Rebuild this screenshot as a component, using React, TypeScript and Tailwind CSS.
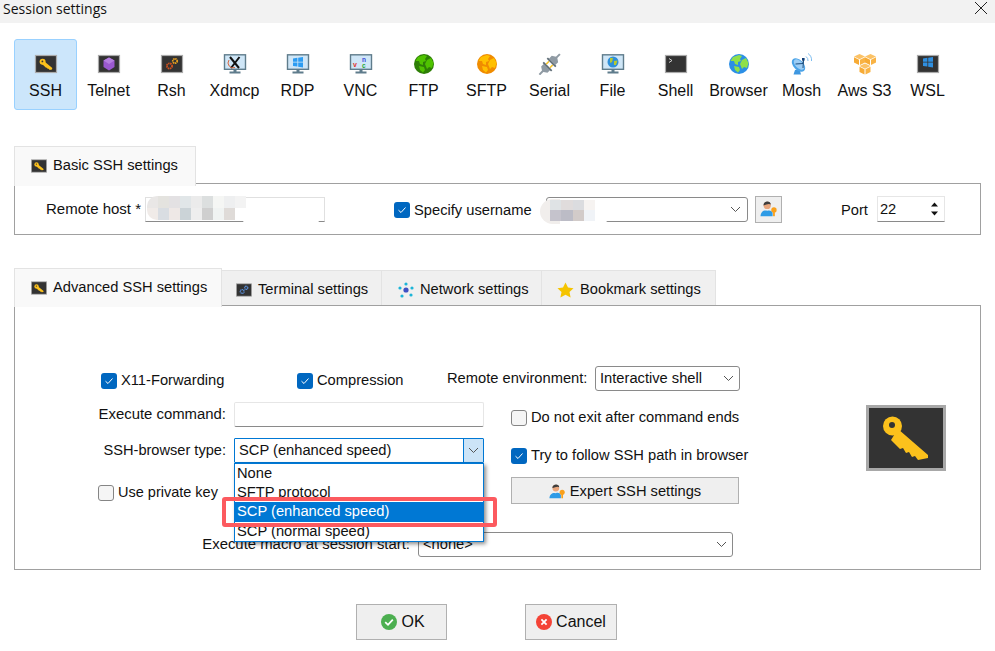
import type { ReactNode } from "react";

// Small drawings used by the toolbar and the tabs
function Key() {
    return (
        <g fill="#fcc11c">
            <circle cx="8.6" cy="7.8" r="3" />
            <polygon points="9.5,6.8 18.3,14 18,15.6 15.6,16 14.8,14.8 13.8,15 13,13.7 12,13.8 8,10" />
            <circle cx="8.4" cy="7.4" r="0.9" fill="#333" />
        </g>
    );
}

function DarkBox({ children }: { children?: ReactNode }) {
    return (
        <svg width="24" height="20" viewBox="0 0 24 20">
            <rect x="1.5" y="1.5" width="21" height="17" fill="#333" stroke="#aaa" strokeWidth="1.2" />
            {children}
        </svg>
    );
}

function TabBox({ children }: { children?: ReactNode }) {
    return (
        <svg width="16" height="14" viewBox="1 1 22 18" className="shrink-0">
            <rect x="1.5" y="1.5" width="21" height="17" fill="#333" stroke="#aaa" />
            {children}
        </svg>
    );
}

function Gears({ a, b }: { a: string; b: string }) {
    return (
        <g fill="none" strokeWidth="1.8">
            <circle cx="9.5" cy="12" r="2.6" stroke={a} strokeDasharray="1.5 .6" />
            <circle cx="15" cy="7" r="2.2" stroke={b} strokeDasharray="1.4 .5" />
        </g>
    );
}

function Globe({ sea, land }: { sea: string; land: string }) {
    return (
        <svg width="20" height="20" viewBox="0 0 20 20">
            <circle cx="10" cy="10" r="10" fill={sea} />
            <path d="M4 3 L10 1 L13 2 L11 5 L12 7 L9 8 L9 11 L6 10 L5 7 L1.5 7 Z" fill={land} />
            <path d="M13 6 L17 4 L19.5 9 L18 14 L15 13 L13 15 L11 10 Z" fill={land} />
            <path d="M5 12 L10 13 L11 16 L9 18.5 L6 16 Z" fill={land} />
        </svg>
    );
}

function Monitor({ children }: { children?: ReactNode }) {
    return (
        <svg width="24" height="20" viewBox="0 0 24 20">
            <rect x="1.5" y="0.8" width="21" height="14.5" fill="#cfe6f7" stroke="#5f7c8c" strokeWidth="1.4" />
            <rect x="10.5" y="15" width="3" height="3" fill="#5f7c8c" />
            <rect x="6.5" y="17.5" width="11" height="2" fill="#5f7c8c" />
            {children}
        </svg>
    );
}

function Windows({ fill }: { fill: string }) {
    return (
        <g fill={fill}>
            <polygon points="7,4.5 11.4,3.8 11.4,7.8 7,7.8" />
            <polygon points="12.2,3.7 17,3 17,7.8 12.2,7.8" />
            <polygon points="7,8.6 11.4,8.6 11.4,12.6 7,12" />
            <polygon points="12.2,8.6 17,8.6 17,13.4 12.2,12.7" />
        </g>
    );
}

function Cube({ x, y }: { x: number; y: number }) {
    return (
        <g transform={`translate(${x} ${y})`}>
            <polygon points="5.5,0 11,2.6 5.5,5.2 0,2.6" fill="#fbc266" />
            <polygon points="0,3.3 5,5.8 5,11 0,8.5" fill="#f7ab35" />
            <polygon points="11,3.3 6,5.8 6,11 11,8.5" fill="#f9b344" />
        </g>
    );
}

function UserKey({ size = 20 }: { size?: number }) {
    return (
        <svg width={size} height={size} viewBox="0 0 20 20">
            <circle cx="8" cy="6" r="4" fill="#e8a57c" />
            <path d="M4 6 C3.5 1 12 0 12 5 C10 3.5 7 5 4 6 Z" fill="#3d3d3d" />
            <path d="M0.5 18 C1 12 5 11 8 12 C11 11 13 12 14 14 L14 18 Z" fill="#2e9be6" />
            <circle cx="15.5" cy="11" r="3" fill="#f9a01b" />
            <rect x="14.5" y="12" width="2" height="6" fill="#f9a01b" />
        </svg>
    );
}

function Chevron() {
    return (
        <svg width="11" height="7" viewBox="0 0 11 7" className="shrink-0">
            <polyline points="1,1 5.5,5.5 10,1" fill="none" stroke="#555" strokeWidth="1" />
        </svg>
    );
}

function Check({ on, className = "" }: { on: boolean; className?: string }) {
    if (!on) {
        return <span className={`block w-4 h-4 shrink-0 rounded-[3px] border border-[#858585] bg-[#f5f5f5] ${className}`} />;
    }
    return (
        <span className={`flex items-center justify-center w-4 h-4 shrink-0 rounded-[3px] bg-[#0067c0] ${className}`}>
            <svg width="10" height="8" viewBox="0 0 10 8">
                <polyline points="1.5,4.2 4,6.5 8.5,1.5" fill="none" stroke="#fff" strokeWidth="1" />
            </svg>
        </span>
    );
}

const SESSION_TYPES: { label: string; icon: ReactNode }[] = [
    { label: "SSH", icon: <DarkBox><Key /></DarkBox> },
    {
        label: "Telnet",
        icon: (
            <DarkBox>
                <polygon points="12,3.5 17.5,6.5 17.5,13 12,16.5 6.5,13 6.5,6.5" fill="#9b59d0" />
                <polygon points="12,3.5 17.5,6.5 12,10 6.5,6.5" fill="#b57ee0" />
            </DarkBox>
        ),
    },
    { label: "Rsh", icon: <DarkBox><Gears a="#d2521e" b="#e8a01e" /></DarkBox> },
    {
        label: "Xdmcp",
        icon: (
            <Monitor>
                <path d="M7 3 L16 14 M16.5 3 L8 14" stroke="#111" strokeWidth="2" />
                <path d="M6 6 A5 5 0 0 0 12 13.5" stroke="#d9653b" strokeWidth="1" fill="none" />
            </Monitor>
        ),
    },
    { label: "RDP", icon: <Monitor><Windows fill="#2c9cf2" /></Monitor> },
    {
        label: "VNC",
        icon: (
            <Monitor>
                <text x="4" y="12.5" fontSize="7" fontWeight="700" fill="#e0332e" fontFamily="Liberation Sans">v</text>
                <text x="13" y="7.5" fontSize="6.5" fontWeight="700" fill="#3848d8" fontFamily="Liberation Sans">n</text>
                <text x="13" y="13.5" fontSize="6.5" fontWeight="700" fill="#28a838" fontFamily="Liberation Sans">c</text>
            </Monitor>
        ),
    },
    { label: "FTP", icon: <Globe sea="#2e7f06" land="#4fc300" /> },
    { label: "SFTP", icon: <Globe sea="#f08c00" land="#ffc000" /> },
    {
        label: "Serial",
        icon: (
            <svg width="24" height="22" viewBox="0 0 24 22">
                <g transform="rotate(-45 12 11)">
                    <rect x="-3" y="10" width="5" height="2" fill="#8f9aa3" />
                    <path d="M1 11 L4 6.5 L7.5 6.5 L7.5 15.5 L4 15.5 Z" fill="#8f9aa3" />
                    <rect x="7.5" y="5" width="1.8" height="12" fill="#5d6b75" />
                    <rect x="9.3" y="7.6" width="4" height="1.6" fill="#f4c430" />
                    <rect x="9.3" y="12.8" width="4" height="1.6" fill="#f4c430" />
                    <rect x="13.3" y="5" width="1.8" height="12" fill="#5d6b75" />
                    <path d="M15 6.5 L19 6.5 L22 11 L19 15.5 L15 15.5 Z" fill="#8f9aa3" />
                    <rect x="21" y="10" width="5" height="2" fill="#8f9aa3" />
                </g>
            </svg>
        ),
    },
    {
        label: "File",
        icon: (
            <Monitor>
                <circle cx="12" cy="8" r="5.5" fill="#2e8fd8" />
                <path d="M9 4 L12 4 L11 8 L9 9 Z M13 7 L16.5 6.5 L15 11 L13 11 Z" fill="#b6c92f" />
            </Monitor>
        ),
    },
    {
        label: "Shell",
        icon: (
            <DarkBox>
                <polyline points="5,4.5 8,6.5 5,8.5" fill="none" stroke="#ddd" strokeWidth="0.9" />
            </DarkBox>
        ),
    },
    { label: "Browser", icon: <Globe sea="#2b8fe6" land="#8fe04a" /> },
    {
        label: "Mosh",
        icon: (
            <svg width="24" height="22" viewBox="0 0 24 22">
                <path d="M5 17 L3.5 21.5 L11 21.5 L9.5 16 Z" fill="#3f97e0" />
                <ellipse cx="8.5" cy="12" rx="8" ry="5" transform="rotate(45 8.5 12)" fill="#4aa3e8" />
                <ellipse cx="9" cy="11.5" rx="6.5" ry="3.6" transform="rotate(45 9 11.5)" fill="#9ccdf5" />
                <path d="M5.5 11 L13 10.5 L13.5 6.5 L13 15" stroke="#1c4f80" strokeWidth="1" fill="none" />
                <rect x="12" y="5" width="2.6" height="2.6" fill="#123f78" />
                <path d="M16 3.5 A5 5 0 0 1 18 8 M18 0.5 A8 8 0 0 1 21.5 8" stroke="#7dbdf0" strokeWidth="1" fill="none" />
            </svg>
        ),
    },
    {
        label: "Aws S3",
        icon: (
            <svg width="24" height="21" viewBox="0 0 24 21">
                <Cube x={1} y={0} />
                <Cube x={12} y={0} />
                <Cube x={6.5} y={9.5} />
            </svg>
        ),
    },
    { label: "WSL", icon: <DarkBox><Windows fill="#2f8fe0" /></DarkBox> },
];

const HOST_BLUR = [
    "bg-[#e9e7e6]", "bg-[#e4e3df]", "bg-[#e3e1e3]", "bg-[#e1e6e8]", "bg-[#ebebeb]", "bg-[#dcdfdf]", "bg-[#f5f6f4]", "bg-[#eeeff0]", "bg-[#f3f3f3]",
    "bg-[#f0ebe8]", "bg-[#d9dde2]", "bg-[#eee8e6]", "bg-[#cbd3d7]", "bg-[#eeeeee]", "bg-[#cfcfcf]", "bg-[#f0f3f2]", "bg-[#dfdbd8]", "bg-white",
];

const USER_BLUR = [
    "bg-[#dfe3e5]", "bg-[#e0dcdc]", "bg-[#dbdcdf]", "bg-[#f6f3f1]",
    "bg-[#c5c3cc]", "bg-[#bcbcc6]", "bg-[#d2cbc9]", "bg-[#f0f3f7]",
];

export default function App() {
    return (
        <div className="relative w-[995px] h-[651px] overflow-hidden bg-white text-[14.7px] text-[#111] font-['Liberation_Sans',sans-serif]">
            {/* Title bar */}
            <div className="flex items-start justify-between h-[23px] pt-[1px] bg-[#f2f2f2]">
                <span className="pl-[3px] text-[14px] leading-[15px] font-['Open_Sans',sans-serif]">Session settings</span>
                <svg width="14" height="14" viewBox="0 0 14 14" className="mr-[7px]">
                    <path d="M1 1 L13 13 M13 1 L1 13" stroke="#222" strokeWidth="1" />
                </svg>
            </div>

            {/* Session types */}
            <div className="flex mt-[16px] ml-[14px]">
                {SESSION_TYPES.map((s) => (
                    <button
                        key={s.label}
                        className={`flex flex-col items-center w-[63px] h-[71px] rounded-[3px] border ${s.label === "SSH" ? "bg-[#cce6fb] border-[#99d1ff]" : "border-transparent"}`}
                    >
                        <span className="flex items-center justify-center h-[22px] mt-[13px]">{s.icon}</span>
                        <span className="mt-[6px] text-[16px] leading-5 whitespace-nowrap">{s.label}</span>
                    </button>
                ))}
            </div>

            {/* Basic settings */}
            <div className="flex items-center gap-[6px] relative z-10 mt-[36px] ml-[14px] pl-[16px] w-[182px] h-[40px] pb-[2px] bg-[#f9f9f9] border border-b-0 border-[#e3e3e3]">
                <TabBox><Key /></TabBox>
                <span>Basic SSH settings</span>
            </div>
            <div className="flex items-center mt-[-3px] mx-[14px] h-[52px] border border-[#a0a0a0]">
                <span className="ml-[31px] w-[99px] text-[15px] mt-[1px]">Remote host *</span>
                <div className="relative w-[180px] h-[25px] bg-white border border-[#e0e0e0] border-b-[#8a8a8a]">
                    <div className="absolute left-[95px] top-[8px] w-[80px] h-[19px] rounded-full bg-white" />
                    <div className="absolute left-[1px] top-[-2px] grid grid-cols-9 grid-rows-2 w-[99px] h-[24px] rounded-l-[10px] overflow-hidden">
                        {HOST_BLUR.map((c, i) => (
                            <span key={i} className={c} />
                        ))}
                    </div>
                </div>
                <Check on className="ml-[69px] mt-[2px]" />
                <span className="ml-[4px] w-[132px] mt-[2px]">Specify username</span>
                <div className="relative flex items-center justify-end pr-[6px] w-[202px] h-[25px] rounded-[3px] border border-[#8a8a8a]">
                    <div className="absolute left-[-7px] top-[1px] w-[20px] h-[25px] rounded-l-full bg-[#f1eeec]" />
                    <div className="absolute left-[13px] top-[1px] w-[52px] h-[25px] rounded-r-full bg-white" />
                    <div className="absolute left-[3px] top-[2px] grid grid-cols-4 w-[45px] h-[21px]">
                        {USER_BLUR.map((c, i) => (
                            <span key={i} className={c} />
                        ))}
                    </div>
                    <Chevron />
                </div>
                <button className="flex items-center justify-center ml-[7px] w-[27px] h-[27px] bg-[#efefef] border border-[#b0b0b0]">
                    <UserKey size={18} />
                </button>
                <span className="ml-[59px] mt-[2px]">Port</span>
                <div className="flex items-center justify-between ml-[9px] pl-[2px] pr-[5px] w-[68px] h-[26px] bg-white border border-[#e6e6e6] border-b-[#8a8a8a]">
                    <span>22</span>
                    <svg width="9" height="16" viewBox="0 0 9 16">
                        <path d="M4.5 1.5 L8 5.5 L1 5.5 Z M1 10.5 L8 10.5 L4.5 14.5 Z" fill="#111" />
                    </svg>
                </div>
            </div>

            {/* Advanced settings tabs */}
            <div className="relative z-10 flex items-start mt-[33px] ml-[14px]">
                <div className="flex items-center gap-[6px] pl-[16px] pb-[1px] w-[208px] h-[39px] bg-[#f9f9f9] border border-b-0 border-[#e3e3e3]">
                    <TabBox><Key /></TabBox>
                    <span>Advanced SSH settings</span>
                </div>
                <div className="flex items-center gap-[6px] mt-[2px] pl-[14px] pt-[3px] w-[160px] h-[35px] bg-[#f0f0f0] border-t border-r border-[#e3e3e3]">
                    <TabBox><Gears a="#5b8fd8" b="#5b8fd8" /></TabBox>
                    <span>Terminal settings</span>
                </div>
                <div className="flex items-center gap-[6px] mt-[2px] pl-[16px] pt-[3px] w-[160px] h-[35px] bg-[#f0f0f0] border-t border-r border-[#e3e3e3]">
                    <svg width="16" height="16" viewBox="0 0 16 16">
                        <g fill="#1cb5d8">
                            <circle cx="2" cy="6" r="1.6" />
                            <circle cx="8" cy="2" r="1.6" />
                            <circle cx="14" cy="6" r="1.6" />
                            <circle cx="4" cy="14" r="1.6" />
                            <circle cx="13" cy="13" r="1.6" />
                        </g>
                        <circle cx="8" cy="8" r="2.6" fill="#3f51c4" />
                    </svg>
                    <span>Network settings</span>
                </div>
                <div className="flex items-center gap-[6px] mt-[2px] pl-[15px] pt-[3px] w-[174px] h-[35px] bg-[#f0f0f0] border-t border-r border-[#e3e3e3]">
                    <svg width="17" height="16" viewBox="0 0 17 16">
                        <polygon points="8.5,0.5 11,5.5 16.5,6.2 12.5,10 13.6,15.5 8.5,12.8 3.4,15.5 4.5,10 0.5,6.2 6,5.5" fill="#f5c400" />
                    </svg>
                    <span>Bookmark settings</span>
                </div>
            </div>

            <div className="mt-[-2px] mx-[14px] h-[265px] pt-[60px] border border-[#a0a0a0]">
                <div className="flex items-center h-[25px]">
                    <Check on className="ml-[86px] mt-[4px]" />
                    <span className="ml-[4px] w-[176px] mt-[4px]">X11-Forwarding</span>
                    <Check on className="mt-[4px]" />
                    <span className="ml-[4px] w-[130px] mt-[4px]">Compression</span>
                    <span className="w-[148px]">Remote environment:</span>
                    <div className="flex items-center justify-between pl-[4px] pr-[5px] w-[145px] h-[25px] rounded-[3px] border border-[#8a8a8a]">
                        <span>Interactive shell</span>
                        <Chevron />
                    </div>
                </div>

                <div className="flex mt-[11px]">
                    <div className="w-[731px] shrink-0">
                        <div className="flex items-center h-[25px]">
                            <span className="w-[211px] shrink-0 text-right text-[14.9px]">Execute command:</span>
                            <div className="ml-[8px] w-[250px] shrink-0 h-[25px] bg-white border border-[#e6e6e6] border-b-[#8a8a8a] rounded-[2px]" />
                            <Check on={false} className="ml-[27px] mt-[6px]" />
                            <span className="ml-[4px] mt-[6px] whitespace-nowrap">Do not exit after command ends</span>
                        </div>

                        <div className="flex items-center h-[25px] mt-[11px]">
                            <span className="w-[211px] shrink-0 text-right text-[14.6px]">SSH-browser type:</span>
                            <div className="relative z-20 flex items-center justify-between shrink-0 ml-[8px] pl-[4px] w-[250px] h-[25px] border border-[#0078d4] rounded-[1px]">
                                <span>SCP (enhanced speed)</span>
                                <span className="flex items-center justify-center w-[20px] h-full bg-[#cce4f7] border-l border-[#0078d4]">
                                    <Chevron />
                                </span>

                                {/* Open list */}
                                <div className="absolute left-[-1px] top-[24px] w-[250px] h-[79px] bg-white border border-[#0078d4] shadow-[2px_2px_4px_rgba(0,0,0,0.45)]">
                                    <div className="pl-[2px] h-[19px] leading-[19px]">None</div>
                                    <div className="pl-[2px] h-[19px] leading-[19px]">SFTP protocol</div>
                                    <div className="pl-[2px] h-[20px] leading-[18px] bg-[#0078d4] text-white">SCP (enhanced speed)</div>
                                    <div className="pl-[2px] h-[19px] leading-[18px]">SCP (normal speed)</div>
                                </div>

                                {/* Red marker round the chosen row */}
                                <div className="absolute left-[-13px] top-[58px] w-[275px] h-[30px] rounded-[3px] border-[4px] border-[#fc5a5f]" />
                            </div>
                            <Check on className="ml-[27px] mt-[10px]" />
                            <span className="ml-[4px] mt-[10px] whitespace-nowrap">Try to follow SSH path in browser</span>
                        </div>

                        <div className="flex items-center h-[27px] mt-[14px]">
                            <Check on={false} className="ml-[83px] mt-[5px]" />
                            <span className="ml-[4px] w-[393px] shrink-0 mt-[5px] text-[14.5px]">Use private key</span>
                            <button className="flex items-center justify-center gap-[4px] shrink-0 w-[228px] h-[27px] pt-[1px] bg-[#efefef] border border-[#b0b0b0]">
                                <UserKey size={17} />
                                <span>Expert SSH settings</span>
                            </button>
                        </div>
                    </div>
                    <svg width="80" height="66" viewBox="0 0 80 66" className="ml-[120px] mt-[3px] shrink-0">
                        <rect x="1.5" y="1.5" width="77" height="63" fill="#333" stroke="#a8a8a8" strokeWidth="3" />
                        <g fill="#fcc11c">
                            <polygon points="32,24 62,50 62,53 52,55 49,51 46,52 43,47 40,48 37,43 34,44 25,35" />
                            <circle cx="26.5" cy="21" r="9.5" />
                        </g>
                        <circle cx="26" cy="20" r="3" fill="#333" />
                    </svg>
                </div>

                <div className="flex items-center h-[25px] mt-[28px]">
                    <span className="w-[395px] text-right text-[14.9px]">Execute macro at session start:</span>
                    <div className="flex items-center justify-between ml-[8px] pl-[4px] pr-[5px] w-[315px] h-[25px] rounded-[3px] border border-[#8a8a8a]">
                        <span>&lt;none&gt;</span>
                        <Chevron />
                    </div>
                </div>
            </div>

            {/* Dialog buttons */}
            <div className="flex mt-[34px] ml-[356px] gap-[78px]">
                <button className="flex items-center justify-center gap-[4px] pl-[3px] w-[91px] h-[36px] bg-[#efefef] border border-[#b0b0b0]">
                    <svg width="16" height="16" viewBox="0 0 16 16">
                        <circle cx="8" cy="8" r="8" fill="#4caf50" />
                        <polyline points="4.2,8.2 7,10.8 11.8,5.6" fill="none" stroke="#fff" strokeWidth="1.8" />
                    </svg>
                    <span className="text-[16px]">OK</span>
                </button>
                <button className="flex items-center justify-center gap-[4px] w-[92px] h-[36px] bg-[#efefef] border border-[#b0b0b0]">
                    <svg width="16" height="16" viewBox="0 0 16 16">
                        <circle cx="8" cy="8" r="8" fill="#f44336" />
                        <path d="M5.4 5.4 L10.6 10.6 M10.6 5.4 L5.4 10.6" stroke="#fff" strokeWidth="1.8" />
                    </svg>
                    <span className="text-[16px]">Cancel</span>
                </button>
            </div>
        </div>
    );
}
